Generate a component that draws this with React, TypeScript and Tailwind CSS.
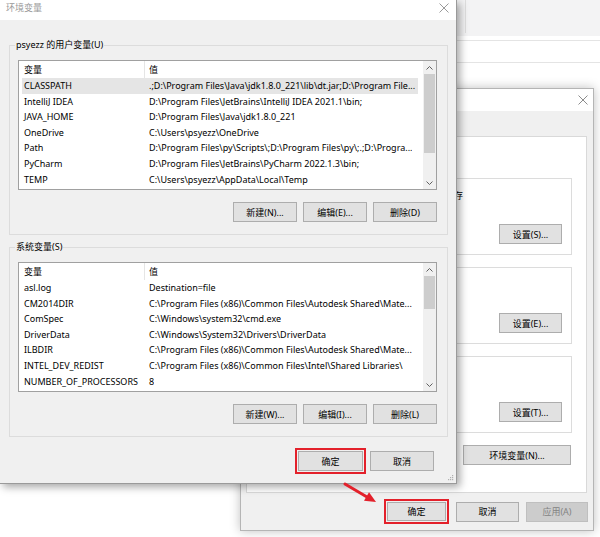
import React from "react";

type Row = [string, string];

const userVars: Row[] = [
  ["CLASSPATH", ".;D:\\Program Files\\Java\\jdk1.8.0_221\\lib\\dt.jar;D:\\Program File..."],
  ["IntelliJ IDEA", "D:\\Program Files\\JetBrains\\IntelliJ IDEA 2021.1\\bin;"],
  ["JAVA_HOME", "D:\\Program Files\\Java\\jdk1.8.0_221"],
  ["OneDrive", "C:\\Users\\psyezz\\OneDrive"],
  ["Path", "D:\\Program Files\\py\\Scripts\\;D:\\Program Files\\py\\;.;D:\\Progra..."],
  ["PyCharm", "D:\\Program Files\\JetBrains\\PyCharm 2022.1.3\\bin;"],
  ["TEMP", "C:\\Users\\psyezz\\AppData\\Local\\Temp"],
];

const sysVars: Row[] = [
  ["asl.log", "Destination=file"],
  ["CM2014DIR", "C:\\Program Files (x86)\\Common Files\\Autodesk Shared\\Mate..."],
  ["ComSpec", "C:\\Windows\\system32\\cmd.exe"],
  ["DriverData", "C:\\Windows\\System32\\Drivers\\DriverData"],
  ["ILBDIR", "C:\\Program Files (x86)\\Common Files\\Autodesk Shared\\Mate..."],
  ["INTEL_DEV_REDIST", "C:\\Program Files (x86)\\Common Files\\Intel\\Shared Libraries\\"],
  ["NUMBER_OF_PROCESSORS", "8"],
];

function Chevron({ up }: { up?: boolean }) {
  return (
    <svg width="7" height="4" viewBox="0 0 7 4" fill="none" stroke="#606060" strokeWidth="1">
      <path d={up ? "M0.5 3.5L3.5 0.5L6.5 3.5" : "M0.5 0.5L3.5 3.5L6.5 0.5"} />
    </svg>
  );
}

function CloseX({ color }: { color: string }) {
  return (
    <svg width="10" height="10" viewBox="0 0 10 10" fill="none" stroke={color} strokeWidth="1">
      <path d="M0.5 0.5L9.5 9.5M9.5 0.5L0.5 9.5" />
    </svg>
  );
}

function ScrollBar({ thumb }: { thumb: string }) {
  return (
    <div className="flex w-[13px] shrink-0 flex-col bg-[#f0f0f0]">
      <div className="flex h-[13px] items-center justify-center">
        <Chevron up />
      </div>
      <div className="flex-1 px-[1px]">
        <div className={`w-full bg-[#cdcdcd] ${thumb}`} />
      </div>
      <div className="flex h-[13px] items-center justify-center">
        <Chevron />
      </div>
    </div>
  );
}

function VarList({ rows, thumb, selected }: { rows: Row[]; thumb: string; selected?: number }) {
  return (
    <div className="flex h-[130px] border border-[#a0a0a0] bg-white">
      <div className="min-w-0 flex-1 overflow-hidden">
        <div className="flex h-[17px] items-stretch">
          <div className="flex w-[126px] items-center border-r border-[#e5e5e5] pl-[5px]">变量</div>
          <div className="flex items-center pl-[4px]">值</div>
        </div>
        {rows.map(([k, v], i) => (
          <div
            key={k}
            className={`ml-[3px] mr-[5px] flex h-[15.6px] items-center whitespace-nowrap ${
              i === selected ? "bg-[#e5e5e5]" : ""
            }`}
          >
            <div className="w-[122px] shrink-0 pl-[2px]">{k}</div>
            <div className="overflow-hidden pl-[5px]">{v}</div>
          </div>
        ))}
      </div>
      <ScrollBar thumb={thumb} />
    </div>
  );
}

function Btn({ children, className = "" }: { children: React.ReactNode; className?: string }) {
  return (
    <div
      className={`flex h-[20px] items-center justify-center border border-[#adadad] bg-[#e1e1e1] leading-none text-black ${className}`}
    >
      {children}
    </div>
  );
}

function Marked({ className, children }: { className: string; children: React.ReactNode }) {
  return (
    <div className={`flex border-2 border-[#e3212b] p-[1px] ${className}`}>
      <div className="flex flex-1 items-center justify-center border border-[#adadad] bg-[#e1e1e1] leading-none">
        {children}
      </div>
    </div>
  );
}

function VarGroup({
  label,
  rows,
  thumb,
  selected,
  keys,
  className,
}: {
  label: string;
  rows: Row[];
  thumb: string;
  selected?: number;
  keys: [string, string, string];
  className: string;
}) {
  return (
    <fieldset className={`ml-[9px] w-[439px] border border-[#dcdcdc] pb-[12px] pl-[8px] pr-[10px] pt-[9px] ${className}`}>
      <legend className="-ml-[3px] px-[1px] leading-[12px]">{label}</legend>
      <VarList rows={rows} thumb={thumb} selected={selected} />
      <div className="mt-[12px] flex justify-end gap-[6px]">
        <Btn className="w-[64px]">新建({keys[0]})...</Btn>
        <Btn className="w-[64px]">编辑({keys[1]})...</Btn>
        <Btn className="w-[64px]">删除({keys[2]})</Btn>
      </div>
    </fieldset>
  );
}

function SettingGroup({ text, btn }: { text?: string; btn: string }) {
  return (
    <div className="flex h-[77px] flex-col border border-[#dcdcdc] pb-[10px] pl-[7px] pr-[9px] pt-[11px]">
      <div className="h-[12px] whitespace-nowrap leading-[12px]">{text}</div>
      <Btn className="mt-auto w-[63px] self-end">{btn}</Btn>
    </div>
  );
}

export default function App() {
  return (
    <div className="relative h-[537px] w-[600px] overflow-hidden bg-white font-['Noto_Sans','Noto_Sans_CJK_SC',sans-serif] text-[9px] text-black">
      {/* page behind the dialogs */}
      <div className="flex h-[36px] bg-[#f3f3f4] pl-[465px]">
        <div className="mb-[3px] w-px bg-[#dedede]" />
      </div>
      <div className="h-[5px] border-b border-[#e4e4e4]" />
      <div className="h-[22px] border-b border-[#e4e4e4]" />

      {/* 系统属性 */}
      <div className="absolute left-[240px] top-[88px] flex h-[443px] w-[354px] flex-col border border-[#b5b5b5] bg-[#f0f0f0] shadow-[0_0_10px_rgba(0,0,0,0.25)]">
        <div className="flex h-[22px] items-center justify-end bg-white pr-[5px]">
          <CloseX color="#8c8c8c" />
        </div>
        <div className="ml-[5px] mt-[25px] flex h-[357px] w-[341px] flex-col border border-[#d9d9d9] bg-white pl-[10px] pr-[14px] pt-[41px]">
          <div className="flex flex-col gap-[12px]">
            <SettingGroup text="视觉效果，处理器计划，内存使用，以及虚拟内存" btn="设置(S)..." />
            <SettingGroup btn="设置(E)..." />
            <SettingGroup btn="设置(T)..." />
          </div>
          <Btn className="mr-[1px] mt-[12px] w-[108px] self-end">环境变量(N)...</Btn>
        </div>
        <div className="mt-[6px] flex items-center justify-end gap-[7px] pr-[5px]">
          <Marked className="h-[25px] w-[65px]">确定</Marked>
          <Btn className="w-[63px]">取消</Btn>
          <div className="flex h-[20px] w-[62px] items-center justify-center border border-[#bfbfbf] bg-[#cccccc] leading-none text-[#838383]">
            应用(A)
          </div>
        </div>
      </div>

      {/* 环境变量 */}
      <div className="absolute left-0 top-0 flex h-[484px] w-[457px] flex-col border-b border-r border-[#9a9a9a] bg-[#f0f0f0] shadow-[3px_3px_8px_rgba(0,0,0,0.35)]">
        <div className="flex h-[20px] items-start justify-between bg-white pl-[6px] pr-[7px] pt-[1px]">
          <span className="leading-[14px] text-[#999]">环境变量</span>
          <div className="pt-[2px]">
            <CloseX color="#9a9a9a" />
          </div>
        </div>
        <VarGroup
          className="mt-[19px]"
          label="psyezz 的用户变量(U)"
          rows={userVars}
          thumb="h-[79px]"
          selected={0}
          keys={["N", "E", "D"]}
        />
        <VarGroup
          className="mt-[6px]"
          label="系统变量(S)"
          rows={sysVars}
          thumb="h-[33px]"
          keys={["W", "I", "L"]}
        />
        <div className="mt-[11px] flex items-center justify-end gap-[4px] pr-[22px]">
          <Marked className="h-[26px] w-[71px]">确定</Marked>
          <Btn className="w-[64px]">取消</Btn>
        </div>
        <svg className="absolute bottom-[2px] right-[2px]" width="7" height="7" viewBox="0 0 7 7" fill="#b0b0b0">
          <rect x="5" y="1" width="1.2" height="1.2" />
          <rect x="3" y="3" width="1.2" height="1.2" />
          <rect x="5" y="3" width="1.2" height="1.2" />
          <rect x="1" y="5" width="1.2" height="1.2" />
          <rect x="3" y="5" width="1.2" height="1.2" />
          <rect x="5" y="5" width="1.2" height="1.2" />
        </svg>
      </div>

      {/* red arrow */}
      <svg className="absolute left-[340px] top-[478px]" width="42" height="30" viewBox="0 0 42 30">
        <path d="M5 6L27 19" stroke="#e3212b" strokeWidth="3" strokeLinecap="round" />
        <path d="M36 24L24 22.8L29 14.2Z" fill="#e3212b" />
      </svg>
    </div>
  );
}
